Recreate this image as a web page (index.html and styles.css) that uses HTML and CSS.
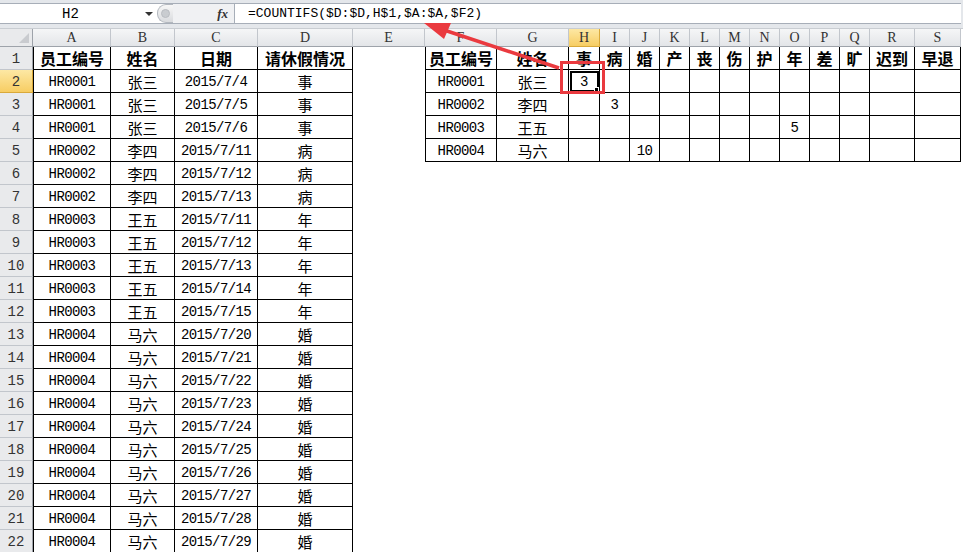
FILE: index.html
```html
<!DOCTYPE html>
<html lang="zh-CN">
<head>
    <meta charset="UTF-8">
    <meta name="viewport" content="width=device-width, initial-scale=1.0">
    <title>请休假统计</title>
    <link rel="stylesheet" href="styles.css">
</head>
<body>
    <div class="topbar">
        <div class="fbar">
            <div class="name-box">H2<span class="drop"></span></div>
            <div class="grip"><span></span></div>
            <div class="fx-area"><span class="fx">fx</span></div>
            <div class="formula">=COUNTIFS($D:$D,H$1,$A:$A,$F2)</div>
        </div>
    </div>

    <div class="sheet" id="sheet"></div>

    <div class="callout"></div>
    <svg class="arrow" width="963" height="552" viewBox="0 0 963 552">
        <line x1="559" y1="68" x2="444" y2="30" />
        <polygon points="424,23 451,23 444,39" />
    </svg>

    <script>
        const COLS = 'ABCDEFGHIJKLMNOPQRS'.split('');
        const sheet = document.getElementById('sheet');

        const records = [
            ['员工编号', '姓名', '日期', '请休假情况'],
            ['HR0001', '张三', '2015/7/4', '事'],
            ['HR0001', '张三', '2015/7/5', '事'],
            ['HR0001', '张三', '2015/7/6', '事'],
            ['HR0002', '李四', '2015/7/11', '病'],
            ['HR0002', '李四', '2015/7/12', '病'],
            ['HR0002', '李四', '2015/7/13', '病'],
            ['HR0003', '王五', '2015/7/11', '年'],
            ['HR0003', '王五', '2015/7/12', '年'],
            ['HR0003', '王五', '2015/7/13', '年'],
            ['HR0003', '王五', '2015/7/14', '年'],
            ['HR0003', '王五', '2015/7/15', '年']
        ];
        for (let d = 20; d <= 29; d++) {
            records.push(['HR0004', '马六', '2015/7/' + d, '婚']);
        }

        // summary table lives in F1:S5
        const summary = [
            ['员工编号', '姓名', '事', '病', '婚', '产', '丧', '伤', '护', '年', '差', '旷', '迟到', '早退'],
            ['HR0001', '张三', '3', '', '', '', '', '', '', '', '', '', '', ''],
            ['HR0002', '李四', '', '3', '', '', '', '', '', '', '', '', '', ''],
            ['HR0003', '王五', '', '', '', '', '', '', '', '5', '', '', '', ''],
            ['HR0004', '马六', '', '', '10', '', '', '', '', '', '', '', '', '']
        ];

        function addCell(text, classes) {
            const div = document.createElement('div');
            div.className = classes.join(' ');
            div.textContent = text;
            sheet.appendChild(div);
            return div;
        }

        function render() {
            addCell('', ['cell', 'corner']);
            COLS.forEach(letter => {
                addCell(letter, ['cell', 'col-hd', letter === 'H' ? 'sel' : '']);
            });

            for (let r = 1; r <= 22; r++) {
                addCell(r, ['cell', 'row-hd', r === 2 ? 'sel' : '']);
                COLS.forEach((letter, c) => {
                    let text = '';
                    const classes = ['cell'];
                    if (c <= 3) {
                        text = records[r - 1][c];
                        classes.push('t');
                        if (c === 0) classes.push('tl');
                    } else if (c >= 5 && r <= 5) {
                        text = summary[r - 1][c - 5];
                        classes.push('t');
                        if (c === 5) classes.push('tl');
                    }
                    if (r === 1) classes.push('head');
                    else if (/^[\x00-\x7f]*$/.test(text)) classes.push('lat');
                    if (letter === 'H' && r === 2) classes.push('active');
                    addCell(text, classes);
                });
            }
        }

        render();
    </script>
</body>
</html>
```

FILE: styles.css
```css
body {
    margin: 0;
    background-color: #fff;
    font-family: "Noto Sans CJK SC", sans-serif;
    color: #000;
    position: relative;
    width: 963px;
    height: 552px;
    overflow: hidden;
}

/* formula bar */
.topbar {
    background-color: #e4e7eb;
    padding: 3px 2px 4px 0;
    border-bottom: 1px solid #c9cdd2;
}

.fbar {
    display: flex;
    height: 19px;
    border-top: 1px solid #a7aeb8;
    border-bottom: 1px solid #a7aeb8;
    background-color: #fff;
}

.name-box {
    width: 157px;
    padding-right: 16px;
    box-sizing: border-box;
    display: flex;
    align-items: center;
    justify-content: center;
    position: relative;
    font-family: "Liberation Mono", monospace;
    font-size: 14px;
}

.drop {
    position: absolute;
    right: 4px;
    top: 8px;
    border-left: 4px solid transparent;
    border-right: 4px solid transparent;
    border-top: 4px solid #333;
}

.grip {
    width: 15px;
    border: 1px solid #b3b8bf;
    border-right: none;
    border-radius: 9px 0 0 9px;
    background: linear-gradient(#f7f7f7, #d9dbde);
    display: flex;
    align-items: center;
    justify-content: center;
}

.grip span {
    width: 7px;
    height: 7px;
    border-radius: 50%;
    background-color: #c9ccd0;
    border: 1px solid #b9bcc1;
}

.fx-area {
    width: 62px;
    background-color: #f0f1f3;
    border-right: 1px solid #a7aeb8;
    display: flex;
    align-items: center;
    justify-content: flex-end;
    padding-right: 6px;
    box-sizing: border-box;
}

.fx {
    font-family: "Liberation Serif", serif;
    font-style: italic;
    font-weight: bold;
    font-size: 13px;
    color: #333;
}

.formula {
    flex: 1;
    padding-left: 13px;
    font-family: "Liberation Mono", monospace;
    font-size: 13px;
    line-height: 19px;
}

/* worksheet grid */
.sheet {
    display: grid;
    grid-template-columns: 33px 78px 64px 83px 95px 72px 72px 72px 31px repeat(9, 30px) 45px 46px;
    grid-template-rows: 18px repeat(22, 23px);
}

.cell {
    box-sizing: border-box;
    display: flex;
    align-items: center;
    justify-content: center;
    white-space: nowrap;
    overflow: hidden;
    font-size: 15px;
    line-height: 1;
}

.corner {
    background-color: #e9eaec;
    border-right: 1px solid #9ea3aa;
    border-bottom: 1px solid #9ea3aa;
    position: relative;
}

.corner::after {
    content: "";
    position: absolute;
    right: 3px;
    bottom: 3px;
    border-left: 10px solid transparent;
    border-bottom: 10px solid #c9cbcf;
}

.col-hd {
    background: linear-gradient(#f5f6f7, #e3e5e8);
    border-right: 1px solid #c2c6cc;
    border-bottom: 1px solid #9ea3aa;
    font-family: "Liberation Serif", serif;
    font-size: 14px;
    color: #333;
}

.row-hd {
    background-color: #e9eaec;
    border-right: 1px solid #9ea3aa;
    border-bottom: 1px solid #c2c6cc;
    font-family: "Liberation Mono", monospace;
    font-size: 14px;
    color: #333;
    align-items: flex-end;
    padding-bottom: 3px;
}

.col-hd.sel, .row-hd.sel {
    background: linear-gradient(#fde8a4, #f7cd63);
    border-color: #d9a93a;
}

.t {
    border-right: 1px solid #000;
    border-bottom: 1px solid #000;
}

.tl {
    border-left: 1px solid #000;
}

.head {
    font-weight: bold;
    font-size: 16px;
}

.lat {
    font-family: "Liberation Mono", monospace;
    font-size: 14px;
    letter-spacing: -0.6px;
    padding-top: 1px;
}

.active {
    position: relative;
    outline: 2px solid #000;
    outline-offset: -3px;
}

.active::after {
    content: "";
    position: absolute;
    right: 0;
    bottom: 0;
    width: 5px;
    height: 5px;
    background-color: #000;
    border: 1px solid #fff;
    box-sizing: border-box;
}

/* annotation */
.callout {
    position: absolute;
    left: 560px;
    top: 61px;
    width: 45px;
    height: 33px;
    border: 3px solid #ea3a3f;
    box-sizing: border-box;
}

.arrow {
    position: absolute;
    left: 0;
    top: 0;
    pointer-events: none;
}

.arrow line {
    stroke: #ea3a3f;
    stroke-width: 3.5;
}

.arrow polygon {
    fill: #ea3a3f;
}
```
